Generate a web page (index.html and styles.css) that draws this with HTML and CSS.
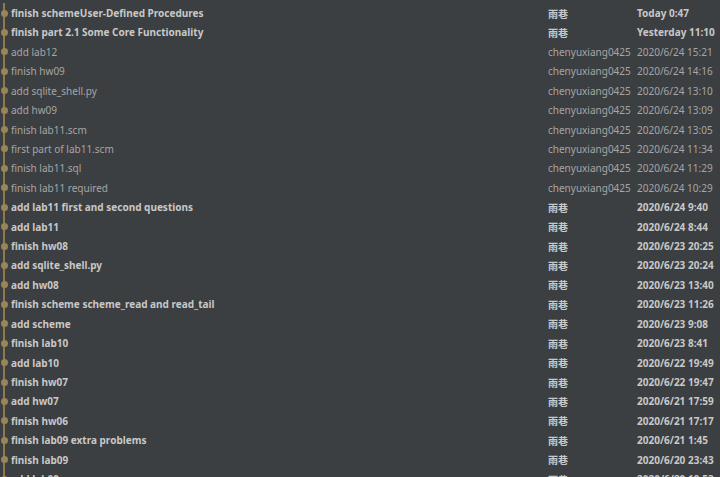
FILE: index.html
```html
<!DOCTYPE html>
<html>
<head>
<meta charset="utf-8">
<link rel="stylesheet" href="styles.css">
</head>
<body>
<div class="log">
  <div class="row b"><span class="graph"><i class="dot"></i></span><span class="subj">finish schemeUser-Defined Procedures</span><span class="author">雨巷</span><span class="date">Today 0:47</span></div>
  <div class="row b"><span class="graph"><i class="dot"></i></span><span class="subj">finish part 2.1 Some Core Functionality</span><span class="author">雨巷</span><span class="date">Yesterday 11:10</span></div>
  <div class="row"><span class="graph"><i class="dot"></i></span><span class="subj">add lab12</span><span class="author">chenyuxiang0425</span><span class="date">2020/6/24 15:21</span></div>
  <div class="row"><span class="graph"><i class="dot"></i></span><span class="subj">finish hw09</span><span class="author">chenyuxiang0425</span><span class="date">2020/6/24 14:16</span></div>
  <div class="row"><span class="graph"><i class="dot"></i></span><span class="subj">add sqlite_shell.py</span><span class="author">chenyuxiang0425</span><span class="date">2020/6/24 13:10</span></div>
  <div class="row"><span class="graph"><i class="dot"></i></span><span class="subj">add hw09</span><span class="author">chenyuxiang0425</span><span class="date">2020/6/24 13:09</span></div>
  <div class="row"><span class="graph"><i class="dot"></i></span><span class="subj">finish lab11.scm</span><span class="author">chenyuxiang0425</span><span class="date">2020/6/24 13:05</span></div>
  <div class="row"><span class="graph"><i class="dot"></i></span><span class="subj">first part of lab11.scm</span><span class="author">chenyuxiang0425</span><span class="date">2020/6/24 11:34</span></div>
  <div class="row"><span class="graph"><i class="dot"></i></span><span class="subj">finish lab11.sql</span><span class="author">chenyuxiang0425</span><span class="date">2020/6/24 11:29</span></div>
  <div class="row"><span class="graph"><i class="dot"></i></span><span class="subj">finish lab11 required</span><span class="author">chenyuxiang0425</span><span class="date">2020/6/24 10:29</span></div>
  <div class="row b"><span class="graph"><i class="dot"></i></span><span class="subj">add lab11 first and second questions</span><span class="author">雨巷</span><span class="date">2020/6/24 9:40</span></div>
  <div class="row b"><span class="graph"><i class="dot"></i></span><span class="subj">add lab11</span><span class="author">雨巷</span><span class="date">2020/6/24 8:44</span></div>
  <div class="row b"><span class="graph"><i class="dot"></i></span><span class="subj">finish hw08</span><span class="author">雨巷</span><span class="date">2020/6/23 20:25</span></div>
  <div class="row b"><span class="graph"><i class="dot"></i></span><span class="subj">add sqlite_shell.py</span><span class="author">雨巷</span><span class="date">2020/6/23 20:24</span></div>
  <div class="row b"><span class="graph"><i class="dot"></i></span><span class="subj">add hw08</span><span class="author">雨巷</span><span class="date">2020/6/23 13:40</span></div>
  <div class="row b"><span class="graph"><i class="dot"></i></span><span class="subj">finish scheme scheme_read and read_tail</span><span class="author">雨巷</span><span class="date">2020/6/23 11:26</span></div>
  <div class="row b"><span class="graph"><i class="dot"></i></span><span class="subj">add scheme</span><span class="author">雨巷</span><span class="date">2020/6/23 9:08</span></div>
  <div class="row b"><span class="graph"><i class="dot"></i></span><span class="subj">finish lab10</span><span class="author">雨巷</span><span class="date">2020/6/23 8:41</span></div>
  <div class="row b"><span class="graph"><i class="dot"></i></span><span class="subj">add lab10</span><span class="author">雨巷</span><span class="date">2020/6/22 19:49</span></div>
  <div class="row b"><span class="graph"><i class="dot"></i></span><span class="subj">finish hw07</span><span class="author">雨巷</span><span class="date">2020/6/22 19:47</span></div>
  <div class="row b"><span class="graph"><i class="dot"></i></span><span class="subj">add hw07</span><span class="author">雨巷</span><span class="date">2020/6/21 17:59</span></div>
  <div class="row b"><span class="graph"><i class="dot"></i></span><span class="subj">finish hw06</span><span class="author">雨巷</span><span class="date">2020/6/21 17:17</span></div>
  <div class="row b"><span class="graph"><i class="dot"></i></span><span class="subj">finish lab09 extra problems</span><span class="author">雨巷</span><span class="date">2020/6/21 1:45</span></div>
  <div class="row b"><span class="graph"><i class="dot"></i></span><span class="subj">finish lab09</span><span class="author">雨巷</span><span class="date">2020/6/20 23:43</span></div>
  <div class="row b"><span class="graph"><i class="dot"></i></span><span class="subj">add lab09</span><span class="author">雨巷</span><span class="date">2020/6/20 19:53</span></div>
</div>
</body>
</html>
```
FILE: styles.css
```css
html, body {
  margin: 0;
  padding: 0;
  background: #3c3f41;
  overflow: hidden;
}
.log {
  padding-top: 3.3px;
  font-family: "Noto Sans", "Noto Sans CJK SC", sans-serif;
  font-size: 10px;
  color: #a6a6a6;
}
.row {
  display: flex;
  align-items: center;
  height: 19.43px;
  white-space: nowrap;
}
.row.b {
  font-weight: bold;
  color: #c8c8c8;
}
.graph {
  width: 11px;
  height: 100%;
  flex: none;
  display: flex;
  align-items: center;
  background: linear-gradient(to right, transparent 3px, #8e7a4c 3px, #8e7a4c 5px, transparent 5px);
}
.dot {
  display: block;
  width: 7px;
  height: 7px;
  margin-left: 0.5px;
  border-radius: 50%;
  background: #9a8556;
}
.subj {
  flex: 1;
  overflow: hidden;
}
.author {
  width: 89px;
  flex: none;
}
.date {
  width: 83px;
  flex: none;
}
```
